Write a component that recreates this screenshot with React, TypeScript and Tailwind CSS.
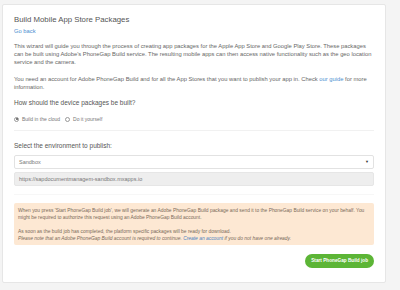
import React from 'react';

const App: React.FC = () => {
  return (
    <div className="w-[400px] h-[290px] bg-[#f4f4f4] overflow-hidden" style={{ fontFamily: '"Liberation Sans", Arial, sans-serif' }}>
      <div className="ml-[2px] mt-[4px] w-[384px] h-[279px] bg-white border border-[#e6e6e6] rounded-[2px] px-[11px] pt-[9px]">
        <h1 className="text-[7.8px] leading-[12px] text-[#555]">Build Mobile App Store Packages</h1>
        <a className="block mt-[1px] text-[5.8px] leading-[8px] text-[#4a8ed0]">Go back</a>

        <p className="mt-[7px] text-[5.8px] leading-[8px] text-[#666]">
          This wizard will guide you through the process of creating app packages for the Apple App Store and Google Play Store. These packages
          can be built using Adobe&apos;s PhoneGap Build service. The resulting mobile apps can then access native functionality such as the geo location
          service and the camera.
        </p>
        <p className="mt-[9px] text-[5.8px] leading-[8px] text-[#666]">
          You need an account for Adobe PhoneGap Build and for all the App Stores that you want to publish your app in. Check <a className="text-[#4a8ed0]">our guide</a> for more
          <br />
          information.
        </p>

        <h2 className="mt-[7px] text-[6.5px] leading-[10px] text-[#555]">How should the device packages be built?</h2>
        <div className="mt-[8px] flex items-center gap-[3px] text-[5px] leading-[6px] text-[#777]">
          <span className="w-[5px] h-[5px] rounded-full border border-[#999] flex items-center justify-center">
            <span className="w-[2px] h-[2px] rounded-full bg-[#555]" />
          </span>
          <span>Build in the cloud</span>
          <span className="ml-[2px] w-[5px] h-[5px] rounded-full border border-[#999]" />
          <span>Do it yourself</span>
        </div>

        <div className="mt-[8px] border-t border-[#f1f1f1]" />

        <h2 className="mt-[10px] text-[6.5px] leading-[10px] text-[#555]">Select the environment to publish:</h2>
        <div className="mt-[4px] h-[14px] border border-[#e2e2e2] rounded-[2px] flex items-center justify-between px-[4px] text-[5.5px] text-[#777]">
          <span>Sandbox</span>
          <span className="text-[4px] text-[#333]">▼</span>
        </div>
        <div className="mt-[3px] h-[14px] bg-[#eeeeee] border border-[#e6e6e6] rounded-[2px] flex items-center px-[4px] text-[5.5px] text-[#777]">
          https://sapdocumentmanagem-sandbox.mxapps.io
        </div>

        <div className="mt-[8px] border-t border-[#f7f7f7]" />

        <div className="mt-[8px] bg-[#fde8d3] rounded-[2px] px-[4px] pt-[4px] pb-[3px] text-[4.9px] leading-[7px] text-[#7a6a5a]">
          <p>
            When you press &apos;Start PhoneGap Build job&apos;, we will generate an Adobe PhoneGap Build package and send it to the PhoneGap Build service on your behalf. You
            might be required to authorize this request using an Adobe PhoneGap Build account.
          </p>
          <p className="mt-[7px]">As soon as the build job has completed, the platform specific packages will be ready for download.</p>
          <p className="italic">
            Please note that an Adobe PhoneGap Build account is required to continue. <a className="text-[#4a7fc0]">Create an account</a> if you do not have one already.
          </p>
        </div>

        <div className="mt-[9px] flex justify-end">
          <button className="h-[14px] px-[6px] rounded-full bg-[#5cb536] text-white text-[4.7px] font-bold">Start PhoneGap Build job</button>
        </div>
      </div>
    </div>
  );
};

export default App;
